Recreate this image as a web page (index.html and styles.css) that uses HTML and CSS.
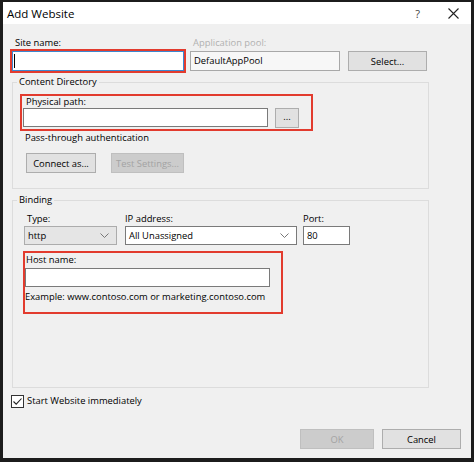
FILE: index.html
```html
<!DOCTYPE html>
<html lang="en">
<head>
    <meta charset="UTF-8">
    <meta name="viewport" content="width=device-width, initial-scale=1.0">
    <title>Add Website</title>
    <link rel="stylesheet" href="styles.css">
</head>
<body>
    <div class="dialog">
        <div class="titlebar">
            <span class="title">Add Website</span>
            <span class="help">?</span>
            <svg class="close" width="11" height="11" viewBox="0 0 11 11">
                <path d="M0.5 0.5 L10.5 10.5 M10.5 0.5 L0.5 10.5" stroke="#222" stroke-width="1.1" fill="none"/>
            </svg>
        </div>

        <div class="content">
            <!-- Site name / application pool -->
            <div class="row top-row">
                <div class="col site-col">
                    <div class="label indent">Site name:</div>
                    <div class="mark site-mark">
                        <div class="field focused"><span class="caret"></span></div>
                    </div>
                </div>
                <div class="col pool-col">
                    <div class="label disabled-text">Application pool:</div>
                    <div class="field readonly pool-field">DefaultAppPool</div>
                </div>
                <div class="col">
                    <div class="label">&nbsp;</div>
                    <div class="btn select-btn">Select...</div>
                </div>
            </div>

            <fieldset class="group content-group">
                <legend>Content Directory</legend>
                <div class="mark path-mark">
                    <div class="label path-label">Physical path:</div>
                    <div class="row">
                        <div class="field path-field"></div>
                        <div class="btn browse-btn">...</div>
                    </div>
                </div>
                <div class="label pass-label">Pass-through authentication</div>
                <div class="row btn-row">
                    <div class="btn connect-btn">Connect as...</div>
                    <div class="btn disabled test-btn">Test Settings...</div>
                </div>
            </fieldset>

            <fieldset class="group binding-group">
                <legend>Binding</legend>
                <div class="row binding-row">
                    <div class="col">
                        <div class="label indent">Type:</div>
                        <div class="combo gray type-combo">
                            <span>http</span>
                            <svg width="9" height="5" viewBox="0 0 9 5"><path d="M0.5 0.5 L4.5 4.5 L8.5 0.5" stroke="#777" fill="none"/></svg>
                        </div>
                    </div>
                    <div class="col">
                        <div class="label">IP address:</div>
                        <div class="combo ip-combo">
                            <span>All Unassigned</span>
                            <svg width="9" height="5" viewBox="0 0 9 5"><path d="M0.5 0.5 L4.5 4.5 L8.5 0.5" stroke="#777" fill="none"/></svg>
                        </div>
                    </div>
                    <div class="col">
                        <div class="label">Port:</div>
                        <div class="field port-field">80</div>
                    </div>
                </div>
                <div class="mark host-mark">
                    <div class="label host-label">Host name:</div>
                    <div class="field host-field"></div>
                    <div class="label example">Example: www.contoso.com or marketing.contoso.com</div>
                </div>
            </fieldset>

            <div class="row check-row">
                <svg class="checkbox" width="13" height="13" viewBox="0 0 13 13">
                    <rect x="0.5" y="0.5" width="12" height="12" fill="#fff" stroke="#333"/>
                    <path d="M2.5 6.5 L5.2 9.2 L10.5 3.5" stroke="#222" stroke-width="1.1" fill="none"/>
                </svg>
                <span>Start Website immediately</span>
            </div>

            <div class="row footer">
                <div class="btn disabled ok-btn">OK</div>
                <div class="btn cancel-btn">Cancel</div>
            </div>
        </div>
    </div>
</body>
</html>
```

FILE: styles.css
```css
body {
    margin: 0;
    background-color: #1c1c1c;
    font-family: "Open Sans", "Noto Sans", sans-serif;
    font-size: 9.4px;
    color: #000;
}
.dialog {
    width: 468px;
    height: 456px;
    margin: 2px 0 0 3px;
    background-color: #f0f0f0;
    display: flex;
    flex-direction: column;
}
.titlebar {
    height: 22px;
    background-color: #fff;
    display: flex;
    align-items: center;
    padding-left: 4px;
    font-size: 11.5px;
}
.title {
    flex: 1;
}
.help {
    margin-right: 28px;
    font-size: 11px;
    color: #444;
}
.close {
    margin-right: 12px;
}
.content {
    flex: 1;
    display: flex;
    flex-direction: column;
    padding-left: 7px;
}
.row {
    display: flex;
}
.col {
    display: flex;
    flex-direction: column;
}
.label {
    line-height: 14px;
    height: 14px;
    white-space: nowrap;
}
.indent {
    margin-left: 3px;
}
.disabled-text {
    color: #b0b0b0;
}

/* text boxes */
.field {
    box-sizing: border-box;
    height: 19px;
    background-color: #fff;
    border: 1px solid #7a7a7a;
    line-height: 17px;
    padding-left: 3px;
    position: relative;
}
.field.focused {
    border-color: #3c87d0;
    height: 20px;
    width: 172px;
}
.caret {
    position: absolute;
    left: 1px;
    top: 2px;
    width: 1px;
    height: 14px;
    background-color: #000;
}
.field.readonly {
    background-color: #f7f7f7;
    border-color: #a8a8a8;
}

/* red annotation frames */
.mark {
    border: 2px solid #e23b2e;
}

/* top row */
.top-row {
    margin-top: 12px;
}
.top-row .label {
    height: 13px;
    line-height: 13px;
}
.site-col .label {
    margin-left: 5px;
}
.pool-col {
    margin-left: 4px;
}
.pool-col .label {
    margin-left: 3px;
}
.pool-field {
    width: 150px;
    height: 20px;
    margin-top: 2px;
}
.select-btn {
    width: 79px;
    height: 21px;
    margin-top: 2px;
    margin-left: 8px;
}

/* buttons */
.btn {
    box-sizing: border-box;
    height: 20px;
    background-color: #e1e1e1;
    border: 1px solid #adadad;
    display: flex;
    align-items: center;
    justify-content: center;
    white-space: nowrap;
}
.btn.disabled {
    background-color: #cccccc;
    border-color: #bfbfbf;
    color: #a3a3a3;
}

/* group boxes */
.group {
    margin: 0 0 0 2px;
    width: 417px;
    box-sizing: border-box;
    border: 1px solid #dcdcdc;
    padding: 5px 0 0 13px;
    min-width: 0;
}
.group legend {
    padding: 0 2px;
    margin-left: -9px;
    line-height: 14px;
}
.content-group {
    margin-top: 2px;
    height: 114px;
}
.path-mark {
    width: 293px;
    height: 37px;
    box-sizing: border-box;
    margin-left: -6px;
    padding-left: 1px;
}
.path-label {
    height: 12px;
    line-height: 12px;
    margin-left: 3px;
}
.path-field {
    width: 245px;
}
.browse-btn {
    width: 24px;
    margin-left: 7px;
    padding-bottom: 4px;
}
.pass-label {
    margin-left: -1px;
}
.btn-row {
    margin-top: 8px;
}
.connect-btn {
    width: 70px;
}
.test-btn {
    width: 73px;
    margin-left: 15px;
}

.binding-group {
    margin-top: 4px;
    height: 195px;
    padding-left: 11px;
}
.binding-group legend {
    margin-left: -7px;
}
.binding-row {
    margin-top: 0;
}
.binding-row .col + .col {
    margin-left: 8px;
}
.binding-row .col:last-child {
    margin-left: 6px;
}
.combo {
    box-sizing: border-box;
    height: 19px;
    border: 1px solid #7a7a7a;
    background-color: #fff;
    display: flex;
    align-items: center;
    justify-content: space-between;
    padding: 0 7px 0 3px;
}
.combo.gray {
    background-color: #e5e5e5;
    border-color: #acacac;
}
.type-combo {
    width: 93px;
}
.ip-combo {
    width: 172px;
}
.port-field {
    width: 47px;
}
.host-mark {
    width: 260px;
    height: 63px;
    box-sizing: border-box;
    margin-top: 6px;
    margin-left: -1px;
}
.host-label {
    margin-left: 1px;
}
.host-field {
    width: 245px;
    margin-top: 1px;
}
.example {
    margin-top: 3px;
}

.check-row {
    margin-top: 6px;
    margin-left: 1px;
    align-items: center;
    line-height: 14px;
}
.checkbox {
    margin-right: 3px;
}
.footer {
    margin-top: auto;
    margin-bottom: 9px;
    justify-content: flex-end;
    padding-right: 10px;
    gap: 8px;
}
.ok-btn {
    width: 74px;
}
.cancel-btn {
    width: 79px;
}
```
